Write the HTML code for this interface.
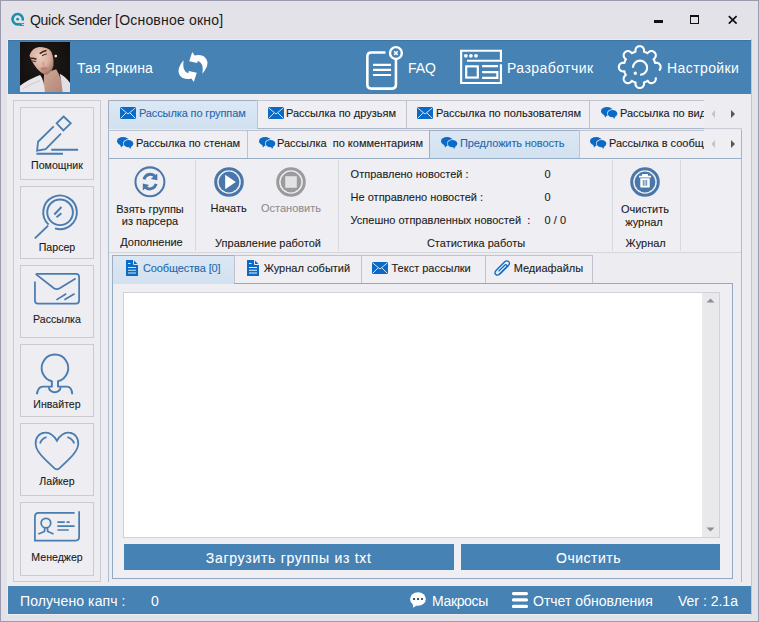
<!DOCTYPE html>
<html><head><meta charset="utf-8">
<style>
*{margin:0;padding:0;box-sizing:border-box}
html,body{width:759px;height:622px;overflow:hidden;background:#e3e2e8;font-family:"Liberation Sans",sans-serif;color:#1b1b1b}
.a{position:absolute}
.t{position:absolute;white-space:nowrap;line-height:1}
#win{position:absolute;left:0;top:0;width:759px;height:622px;border:1px solid #9d9bb0;background:#e3e2e8}
#hdr{position:absolute;left:8px;top:40px;width:743px;height:54px;background:#4682b4;border-top:1px solid #3f73a0}
.wt{color:#fff;font-size:14px}
.lbtn{position:absolute;left:20px;width:74px;height:73px;border:1px solid #c9cad3;background:#ededf2}
.lbtn svg{position:absolute;left:0;top:0}
.lbl{position:absolute;left:0;width:72px;text-align:center;font-size:10.6px;line-height:1;-webkit-text-stroke:0.1px currentColor}
.tab{position:absolute;height:29px;border:1px solid #bfc3ce;border-bottom:none;background:#eeeef3}
.tab.sel{background:linear-gradient(#dbe7f4,#d2e1f0);border-color:#a2aebf}
.tt{position:absolute;font-size:11px;line-height:1;white-space:nowrap;-webkit-text-stroke:0.1px currentColor}
.blue{color:#1f68ae;letter-spacing:-0.12px}
.ico{position:absolute}
</style></head><body>
<div id="win"></div>
<div class="a" style="left:7px;top:39px;width:745px;height:576px;background:#ececf1;border-right:1px solid #c3c5ce"></div>

<!-- title bar -->

<div class="t" style="left:30px;top:13px;font-size:14px;color:#1b1b1b"><span style="letter-spacing:-0.28px">Quick Sender </span><span style="letter-spacing:0.2px">[Основное окно]</span></div>
<div class="a" style="left:654px;top:20px;width:9px;height:3px;background:#111"></div>
<div class="a" style="left:690px;top:15px;width:9px;height:9px;border:1px solid #111;border-top-width:2px"></div>
<svg class="a" style="left:728px;top:15px" width="10" height="10" viewBox="0 0 10 10"><path d="M0.8 1.2L8.6 8.6M8.6 1.2L0.8 8.6" stroke="#111" stroke-width="1.7"/></svg>

<!-- header -->
<div id="hdr"></div>
<svg class="a" style="left:20px;top:42px" width="50" height="50" viewBox="0 0 622 622">
<defs>
<radialGradient id="sk" cx="0.45" cy="0.35" r="0.65"><stop offset="0" stop-color="#ecccbd"/><stop offset="0.6" stop-color="#d9b09f"/><stop offset="1" stop-color="#a57a69"/></radialGradient>
<linearGradient id="nk" x1="0" y1="0" x2="1" y2="1"><stop offset="0" stop-color="#d0a897"/><stop offset="1" stop-color="#b08675"/></linearGradient>
<radialGradient id="bg" cx="0.5" cy="0.4" r="0.7"><stop offset="0" stop-color="#221b17"/><stop offset="1" stop-color="#0f0d0d"/></radialGradient>
</defs>
<rect width="622" height="622" fill="url(#bg)"/>
<path d="M300 390 L450 340 Q520 450 550 622 L300 622 Q290 500 300 390Z" fill="url(#nk)"/>
<path d="M110 150 Q150 60 250 55 Q350 55 390 120 Q425 200 415 300 Q395 380 330 410 Q270 400 210 330 Q150 260 110 150Z" fill="url(#sk)"/>
<path d="M100 130 Q160 30 280 35 Q360 40 405 110 Q330 62 240 62 Q150 70 115 170Z" fill="#1a1210"/>
<path d="M115 205 Q160 195 205 215 M245 145 Q290 110 330 105" stroke="#3b2620" stroke-width="18" fill="none"/>
<path d="M140 240 Q170 232 200 245 M275 170 Q305 150 335 150" stroke="#4a3028" stroke-width="14" fill="none"/>
<path d="M255 325 Q300 300 350 325 Q320 365 270 350Z" fill="#c27c72"/>
<path d="M290 250 Q280 285 300 300" stroke="#b78b7a" stroke-width="12" fill="none"/>
<circle cx="445" cy="175" r="17" fill="#ece8e4"/>
<path d="M0 545 Q90 470 250 410 Q300 470 310 622 L0 622Z" fill="#e8e5ea"/>
<path d="M495 395 Q570 430 622 510 L622 622 L530 622 Q520 500 495 395Z" fill="#e2dfe4"/>
<path d="M40 580 Q150 510 250 480" stroke="#cdc8cf" stroke-width="12" fill="none"/>
</svg>
<div class="t wt" style="left:77px;top:61px;letter-spacing:0.15px">Тая Яркина</div>


<div class="t wt" style="left:408px;top:61px">FAQ</div>

<div class="t wt" style="left:507px;top:61px;letter-spacing:0.44px">Разработчик</div>

<div class="t wt" style="left:667px;top:61px;letter-spacing:0.41px">Настройки</div>

<!-- left panel -->
<div class="a" style="left:13px;top:100px;width:88px;height:482px;border:1px solid #c9cad3"></div>
<div class="lbtn" style="top:107px"><div class="lbl" style="top:52px">Помощник</div></div>
<div class="lbtn" style="top:186px"><div class="lbl" style="top:55px">Парсер</div></div>
<div class="lbtn" style="top:265px"><div class="lbl" style="top:48px">Рассылка</div></div>
<div class="lbtn" style="top:344px"><div class="lbl" style="top:54px">Инвайтер</div></div>
<div class="lbtn" style="top:423px"><div class="lbl" style="top:52px">Лайкер</div></div>
<div class="lbtn" style="top:502px;height:74px"><div class="lbl" style="top:49px">Менеджер</div></div>

<!-- main tab area -->
<div class="a" style="left:108px;top:100px;width:1px;height:482px;background:#a9bdd5"></div>
<div class="a" style="left:741px;top:129px;width:1px;height:453px;background:#a9bdd5"></div>



<!-- row 1 tabs -->
<div class="a" style="left:108px;top:128px;width:634px;height:1px;background:#c8cdd8"></div>
<div class="tab sel" style="left:108px;top:100px;width:150px;height:29px"></div>
<div class="tab" style="left:257px;top:100px;width:150px;height:29px;border-bottom:1px solid #a9b6c8"></div>
<div class="tab" style="left:406px;top:100px;width:184px;height:29px;border-bottom:1px solid #a9b6c8"></div>
<div class="tab" style="left:589px;top:100px;width:115px;height:29px;border-right:none;border-bottom:1px solid #a9b6c8;overflow:hidden"></div>
<svg class="ico" style="left:120px;top:107px" width="16" height="12" viewBox="0 0 16 12"><rect x="0" y="0" width="16" height="12" rx="1.5" fill="#0b6ac6"/><path d="M1 1.2 L8 7 L15 1.2 M1 11 L6 6 M15 11 L10 6" stroke="#cfe3f7" stroke-width="1" fill="none"/></svg><svg class="ico" style="left:268px;top:107px" width="16" height="12" viewBox="0 0 16 12"><rect x="0" y="0" width="16" height="12" rx="1.5" fill="#0b6ac6"/><path d="M1 1.2 L8 7 L15 1.2 M1 11 L6 6 M15 11 L10 6" stroke="#cfe3f7" stroke-width="1" fill="none"/></svg><svg class="ico" style="left:417px;top:107px" width="16" height="12" viewBox="0 0 16 12"><rect x="0" y="0" width="16" height="12" rx="1.5" fill="#0b6ac6"/><path d="M1 1.2 L8 7 L15 1.2 M1 11 L6 6 M15 11 L10 6" stroke="#cfe3f7" stroke-width="1" fill="none"/></svg><svg class="ico" style="left:601px;top:107px" width="17" height="12" viewBox="0 0 17 12"><ellipse cx="6" cy="4.3" rx="6" ry="4.2" fill="#0b6ac6"/><path d="M3 7 L4 10.5 L7 7.5Z" fill="#0b6ac6"/><ellipse cx="11.5" cy="6.5" rx="5.5" ry="4.2" fill="#eeeef3"/><ellipse cx="11.5" cy="6.6" rx="4.8" ry="3.7" fill="#0b6ac6"/><path d="M12 9.5 L13 12 L14.5 9.5Z" fill="#0b6ac6"/></svg>
<div class="tt blue" style="left:139px;top:108px">Рассылка по группам</div>
<div class="tt" style="left:286px;top:108px">Рассылка по друзьям</div>
<div class="tt" style="left:436px;top:108px">Рассылка по пользователям</div>
<div class="tt" style="left:620px;top:108px;width:84px;overflow:hidden">Рассылка по видео</div>
<svg class="a" style="left:709px;top:108px" width="30" height="12" viewBox="0 0 30 12"><path d="M6 2 L2.5 6 L6 10Z" fill="#c4c4c8"/><path d="M22 2 L26 6 L22 10Z" fill="#555"/></svg>

<!-- row 2 tabs -->
<div class="a" style="left:108px;top:129px;width:634px;height:30px;border:1px solid #a3b5cc;border-top:1px solid #e6ebf3;border-bottom:1px solid #9aaec6;background:#eeeef3"></div>
<div class="tab" style="left:109px;top:130px;width:139px;height:28px;border-left:none"></div>
<div class="tab" style="left:247px;top:130px;width:183px;height:28px"></div>
<div class="tab sel" style="left:429px;top:130px;width:151px;height:28px"></div>
<div class="tab" style="left:579px;top:130px;width:125px;height:28px;border-right:none"></div>
<svg class="ico" style="left:117px;top:137px" width="17" height="12" viewBox="0 0 17 12"><ellipse cx="6" cy="4.3" rx="6" ry="4.2" fill="#0b6ac6"/><path d="M3 7 L4 10.5 L7 7.5Z" fill="#0b6ac6"/><ellipse cx="11.5" cy="6.5" rx="5.5" ry="4.2" fill="#eeeef3"/><ellipse cx="11.5" cy="6.6" rx="4.8" ry="3.7" fill="#0b6ac6"/><path d="M12 9.5 L13 12 L14.5 9.5Z" fill="#0b6ac6"/></svg><svg class="ico" style="left:259px;top:137px" width="17" height="12" viewBox="0 0 17 12"><ellipse cx="6" cy="4.3" rx="6" ry="4.2" fill="#0b6ac6"/><path d="M3 7 L4 10.5 L7 7.5Z" fill="#0b6ac6"/><ellipse cx="11.5" cy="6.5" rx="5.5" ry="4.2" fill="#eeeef3"/><ellipse cx="11.5" cy="6.6" rx="4.8" ry="3.7" fill="#0b6ac6"/><path d="M12 9.5 L13 12 L14.5 9.5Z" fill="#0b6ac6"/></svg><svg class="ico" style="left:441px;top:137px" width="17" height="12" viewBox="0 0 17 12"><ellipse cx="6" cy="4.3" rx="6" ry="4.2" fill="#0b6ac6"/><path d="M3 7 L4 10.5 L7 7.5Z" fill="#0b6ac6"/><ellipse cx="11.5" cy="6.5" rx="5.5" ry="4.2" fill="#d6e3f1"/><ellipse cx="11.5" cy="6.6" rx="4.8" ry="3.7" fill="#0b6ac6"/><path d="M12 9.5 L13 12 L14.5 9.5Z" fill="#0b6ac6"/></svg><svg class="ico" style="left:590px;top:137px" width="17" height="12" viewBox="0 0 17 12"><ellipse cx="6" cy="4.3" rx="6" ry="4.2" fill="#0b6ac6"/><path d="M3 7 L4 10.5 L7 7.5Z" fill="#0b6ac6"/><ellipse cx="11.5" cy="6.5" rx="5.5" ry="4.2" fill="#eeeef3"/><ellipse cx="11.5" cy="6.6" rx="4.8" ry="3.7" fill="#0b6ac6"/><path d="M12 9.5 L13 12 L14.5 9.5Z" fill="#0b6ac6"/></svg>
<div class="tt" style="left:136px;top:138px">Рассылка по стенам</div>
<div class="tt" style="left:277px;top:138px">Рассылка&nbsp; по комментариям</div>
<div class="tt blue" style="left:460px;top:138px">Предложить новость</div>
<div class="tt" style="left:609px;top:138px;width:95px;overflow:hidden">Рассылка в сообществах</div>
<svg class="a" style="left:709px;top:138px" width="30" height="12" viewBox="0 0 30 12"><path d="M6 2 L2.5 6 L6 10Z" fill="#c4c4c8"/><path d="M22 2 L26 6 L22 10Z" fill="#555"/></svg>


<!-- ribbon -->
<div class="a" style="left:109px;top:159px;width:632px;height:94px;background:#efeff3;border-bottom:1px solid #d5d7de"></div>
<div class="a" style="left:195px;top:160px;width:1px;height:91px;background:#d8d9e0"></div>
<div class="a" style="left:338px;top:160px;width:1px;height:91px;background:#d8d9e0"></div>
<div class="a" style="left:612px;top:160px;width:1px;height:91px;background:#d8d9e0"></div>
<div class="a" style="left:680px;top:160px;width:1px;height:91px;background:#d8d9e0"></div>
<svg class="ico" style="left:128px;top:160px" width="45" height="45" viewBox="0 0 622 622">
  <circle cx="303" cy="302" r="200" fill="none" stroke="#4a77a9" stroke-width="28"/>
  <path d="M222 268 A90 90 0 0 1 375 225" fill="none" stroke="#4a77a9" stroke-width="40"/>
  <path d="M405 185 L405 280 L315 262Z" fill="#4a77a9"/>
  <path d="M388 330 A90 90 0 0 1 232 368" fill="none" stroke="#4a77a9" stroke-width="40"/>
  <path d="M205 420 L205 325 L292 345Z" fill="#4a77a9"/>
</svg>
<svg class="ico" style="left:212px;top:165px" width="34" height="34" viewBox="0 0 34 34">
  <circle cx="17" cy="17" r="13.3" fill="none" stroke="#4a77a9" stroke-width="3"/>
  <circle cx="17" cy="17" r="10.4" fill="#4a77a9"/>
  <path d="M13.2 9.8 L23.8 17 L13.2 24.2Z" fill="#fff"/>
</svg>
<svg class="ico" style="left:274px;top:165px" width="34" height="34" viewBox="0 0 34 34">
  <circle cx="17" cy="17" r="13.3" fill="none" stroke="#9b9b9d" stroke-width="3"/>
  <circle cx="17" cy="17" r="10.4" fill="#9b9b9d"/>
  <rect x="11.2" y="11.2" width="11.6" height="11.6" fill="#e2e2e4"/>
</svg>
<svg class="ico" style="left:628px;top:165px" width="34" height="34" viewBox="0 0 34 34">
  <circle cx="17" cy="17" r="13.3" fill="none" stroke="#4a77a9" stroke-width="3"/>
  <circle cx="17" cy="17" r="10.4" fill="#4a77a9"/>
  <path d="M11 11.6 H23 M15 11.6 V10 H19 V11.6" stroke="#fff" stroke-width="1.8" fill="none"/>
  <path d="M12.3 13.3 H21.7 V22 Q21.7 22.5 21 22.5 H13 Q12.3 22.5 12.3 22Z" fill="#fff"/>
  <path d="M15.3 15 V20.8 M17 15 V20.8 M18.7 15 V20.8" stroke="#4a77a9" stroke-width="0.9"/>
</svg>
<div class="tt" style="top:204.4px;font-size:11px;left:80.0px;width:140px;text-align:center;">Взять группы</div>
<div class="tt" style="top:216.0px;font-size:11px;left:80.0px;width:140px;text-align:center;">из парсера</div>
<div class="tt" style="top:237.2px;font-size:11px;left:81.5px;width:140px;text-align:center;">Дополнение</div>
<div class="tt" style="top:203.3px;font-size:11px;left:210.5px;">Начать</div>
<div class="tt" style="top:203.3px;font-size:11px;color:#8d8d90;left:261px;">Остановить</div>
<div class="tt" style="top:237.7px;font-size:11px;left:198.0px;width:140px;text-align:center;">Управление работой</div>
<div class="tt" style="top:168.5px;font-size:11px;left:350.6px;">Отправлено новостей :</div>
<div class="tt" style="top:191.6px;font-size:11px;left:350.6px;">Не отправлено новостей :</div>
<div class="tt" style="top:215.0px;font-size:11px;left:350.6px;">Успешно отправленных новостей &nbsp;:</div>
<div class="tt" style="top:168.5px;font-size:11px;left:544.6px;">0</div>
<div class="tt" style="top:191.6px;font-size:11px;left:544.6px;">0</div>
<div class="tt" style="top:215.0px;font-size:11px;left:544.6px;">0 / 0</div>
<div class="tt" style="top:238.2px;font-size:11px;left:406.0px;width:140px;text-align:center;">Статистика работы</div>
<div class="tt" style="top:203.7px;font-size:11px;left:615.0px;width:60px;text-align:center;">Очистить</div>
<div class="tt" style="top:217.1px;font-size:11px;left:614.0px;width:60px;text-align:center;">журнал</div>
<div class="tt" style="top:238.2px;font-size:11px;left:615.7px;width:60px;text-align:center;">Журнал</div>

<!-- tab control 3 -->
<div class="a" style="left:112px;top:283px;width:621px;height:296px;border:1px solid #94a8c1;background:#eeeef3"></div>
<div class="tab sel" style="left:112px;top:255px;width:123px;height:29px"></div>
<div class="tab" style="left:234px;top:255px;width:128px;height:28px"></div>
<div class="tab" style="left:361px;top:255px;width:125px;height:28px"></div>
<div class="tab" style="left:485px;top:255px;width:108px;height:28px"></div>
<svg class="ico" style="left:126px;top:260px" width="12" height="16" viewBox="0 0 12 16"><path d="M0 0 H7.5 L12 4.5 V16 H0Z" fill="#0b6ac6"/><path d="M7.5 0 V4.5 H12" fill="none" stroke="#d5e3f1" stroke-width="1"/><path d="M2 3.5 H4.5 M2 7.5 H10 M2 10.3 H10 M2 13 H10" stroke="#d5e3f1" stroke-width="1.1"/></svg><svg class="ico" style="left:247px;top:260px" width="12" height="16" viewBox="0 0 12 16"><path d="M0 0 H7.5 L12 4.5 V16 H0Z" fill="#0b6ac6"/><path d="M7.5 0 V4.5 H12" fill="none" stroke="#eeeef3" stroke-width="1"/><path d="M2 3.5 H4.5 M2 7.5 H10 M2 10.3 H10 M2 13 H10" stroke="#eeeef3" stroke-width="1.1"/></svg><svg class="ico" style="left:372px;top:262px" width="16" height="12" viewBox="0 0 16 12"><rect x="0" y="0" width="16" height="12" rx="1.5" fill="#0b6ac6"/><path d="M1 1.2 L8 7 L15 1.2 M1 11 L6 6 M15 11 L10 6" stroke="#cfe3f7" stroke-width="1" fill="none"/></svg><svg class="ico" style="left:494px;top:260px" width="18" height="16" viewBox="0 0 18 16"><path d="M5.5 14.5 L14.5 5.5 Q16.5 3 14.5 1.5 Q12.5 0 10.5 2 L2 10.5 Q0 13 1.8 14.5 Q3.5 16 5.5 14 L12.5 7 Q13.5 5.8 12.6 5 Q11.7 4.2 10.7 5.2 L4.5 11.4" fill="none" stroke="#0b6ac6" stroke-width="1.3"/></svg><div class="tt" style="top:262.7px;font-size:11px;color:#1f68ae;letter-spacing:-0.12px;left:143px;">Сообщества [0]</div>
<div class="tt" style="top:262.7px;font-size:11px;left:263.7px;">Журнал событий</div>
<div class="tt" style="top:262.7px;font-size:11px;left:391.5px;">Текст рассылки</div>
<div class="tt" style="top:262.7px;font-size:11px;left:513.7px;">Медиафайлы</div>

<div class="a" style="left:123px;top:292px;width:597px;height:246px;background:#fff;border:1px solid #d0d2d8"></div>
<div class="a" style="left:702px;top:293px;width:17px;height:244px;background:#e9e9eb"></div>
<svg class="a" style="left:702px;top:293px" width="17" height="244" viewBox="0 0 17 244"><path d="M4.5 9.5 L8.5 5.5 L12.5 9.5Z" fill="#8f8f93"/><path d="M4.5 234.5 L8.5 238.5 L12.5 234.5Z" fill="#8f8f93"/></svg>
<div class="a" style="left:124px;top:544px;width:330px;height:26px;background:#4682b4"></div>
<div class="a" style="left:461px;top:544px;width:259px;height:26px;background:#4682b4"></div>
<div class="tt" style="top:550.9px;font-size:14px;color:#fff;left:138.7px;width:300px;text-align:center;letter-spacing:0.7px;">Загрузить группы из txt</div>
<div class="tt" style="top:550.9px;font-size:14px;color:#fff;left:488.5px;width:200px;text-align:center;letter-spacing:0.5px;">Очистить</div>

<!-- status bar -->
<div class="a" style="left:8px;top:586px;width:743px;height:28px;background:#4682b4"></div>
<div class="t wt" style="left:20px;top:594px;letter-spacing:0.1px">Получено капч :</div>
<div class="t wt" style="left:151px;top:594px">0</div>
<div class="t wt" style="left:432px;top:594px;letter-spacing:-0.35px">Макросы</div>
<div class="t wt" style="left:533px;top:594px">Отчет обновления</div>
<div class="t wt" style="left:678px;top:594px">Ver : 2.1a</div>
<!-- icons -->
<svg class="a" style="left:30px;top:110px" width="55" height="50" viewBox="0 0 684 622" fill="none" stroke-linecap="butt"><g stroke="#4a7cb0" stroke-width="22"><path d="M418 81 L507 165 L415 254 L331 165Z"/><path d="M295 205 L100 395 L88 505 L195 488 L385 295"/><path d="M265 495 H598 M80 545 H410" stroke-width="24"/></g></svg>
<svg class="a" style="left:30px;top:188px" width="55" height="55" viewBox="0 0 622 622" fill="none" stroke-linecap="butt"><g stroke="#4a7cb0" stroke-width="22"><path d="M210.4 414 A190 190 0 1 1 282.9 456.2"/><circle cx="340" cy="275" r="145"/><path d="M205 425 L55 570"/><path d="M275 300 L355 215 M300 330 L355 285"/></g></svg>
<svg class="a" style="left:30px;top:268px" width="55" height="42" viewBox="0 0 759 580" fill="none" stroke-linecap="butt"><g stroke="#4a7cb0" stroke-width="24"><path d="M80 80 H635 Q678 80 678 123 V450 Q678 492 635 492 H110 Q68 492 68 450 V185"/><path d="M80 85 L330 280 Q370 305 410 280 L630 145"/><path d="M365 440 L500 355 M475 440 L615 355"/></g></svg>
<svg class="a" style="left:30px;top:346px" width="55" height="50" viewBox="0 0 684 622" fill="none" stroke-linecap="butt"><g stroke="#4a7cb0" stroke-width="24"><path d="M272 438 A165 168 0 1 1 348 438"/><path d="M272 430 V512 M348 430 V512"/><path d="M235 512 A72 62 0 0 0 380 512"/><path d="M85 600 Q100 505 160 505 H272 M348 505 H460 Q520 505 525 600"/></g></svg>
<svg class="a" style="left:30px;top:425px" width="55" height="50" viewBox="0 0 684 622" fill="none" stroke-linecap="butt"><g stroke="#4a7cb0" stroke-width="22"><path d="M335 195 C290 120 230 90 185 95 C110 100 65 160 70 240 C75 320 140 385 200 440 L305 540 Q335 565 365 540 L470 440 C530 385 595 320 600 240 C605 160 560 100 485 95 C440 90 380 120 335 195 Z"/><path d="M125 230 Q145 165 205 150 M465 150 Q525 165 550 230"/></g></svg>
<svg class="a" style="left:30px;top:505px" width="55" height="40" viewBox="0 0 759 552" fill="none" stroke-linecap="butt"><g stroke="#4a7cb0" stroke-width="24"><path d="M615 108 H120 Q68 108 68 160 V490 H630 Q678 490 678 442 V85"/><circle cx="220" cy="250" r="66"/><path d="M203 318 L200 365 L115 400 M240 318 L245 365 L325 400"/><path d="M378 235 H480 M505 235 H548 M378 290 H615 M378 345 H535"/></g></svg>
<svg class="a" style="left:614px;top:42px" width="52" height="50" viewBox="0 0 647 622" fill="none" stroke-linecap="butt"><g stroke="#fff" stroke-width="26"><path d="M516.9 439.8 L519.0 446.8 L520.0 453.3 L520.1 459.4 L519.6 465.1 L518.5 470.5 L516.9 475.7 L514.8 480.5 L512.3 485.1 L509.4 489.3 L506.2 493.3 L502.7 497.0 L498.8 500.3 L494.7 503.3 L490.2 505.9 L485.5 508.2 L480.4 509.9 L475.1 511.2 L469.5 512.0 L463.6 512.1 L457.3 511.5 L450.5 509.8 L443.0 506.7 L434.3 501.1 L419.1 483.4 L415.7 485.3 L412.3 487.2 L408.9 488.9 L405.4 490.6 L401.9 492.3 L398.3 493.9 L394.7 495.4 L391.1 496.8 L387.5 498.1 L383.8 499.4 L380.1 500.6 L376.4 501.8 L372.7 502.9 L373.2 520.5 L371.8 532.8 L369.0 541.2 L365.6 547.7 L361.7 553.0 L357.5 557.5 L353.1 561.2 L348.5 564.3 L343.8 566.8 L338.9 568.8 L333.9 570.3 L328.9 571.3 L323.8 571.9 L318.7 572.0 L313.6 571.6 L308.5 570.8 L303.5 569.6 L298.6 567.8 L293.8 565.6 L289.1 562.8 L284.6 559.4 L280.3 555.3 L276.2 550.4 L272.6 544.5 L269.5 537.2 L267.2 527.3 L268.8 504.7 L265.4 502.3 L261.6 501.2 L257.9 500.0 L254.3 498.8 L250.6 497.4 L247.0 496.1 L243.4 494.6 L239.8 493.1 L236.3 491.4 L232.8 489.8 L229.3 488.0 L225.9 486.2 L222.5 484.3 L210.9 496.3 L200.9 504.4 L193.0 508.5 L186.0 510.8 L179.4 511.9 L173.3 512.1 L167.6 511.7 L162.1 510.6 L156.9 509.1 L152.0 507.1 L147.5 504.6 L143.1 501.8 L139.1 498.6 L135.4 495.1 L132.1 491.3 L129.0 487.2 L126.4 482.8 L124.1 478.0 L122.2 473.1 L120.9 467.8 L120.1 462.2 L119.9 456.3 L120.4 450.0 L121.9 443.3 L124.8 436.0 L130.0 427.5 L143.6 414.5 L146.9 408.1 L145.1 404.7 L143.3 401.3 L141.6 397.8 L139.9 394.3 L138.3 390.7 L136.8 387.2 L135.4 383.6 L134.0 379.9 L132.7 376.3 L131.5 372.6 L130.3 368.9 L129.3 365.1 L113.6 365.2 L100.3 364.0 L91.7 361.4 L85.0 358.0 L79.5 354.2 L75.0 350.1 L71.2 345.7 L68.1 341.1 L65.5 336.3 L63.4 331.5 L61.9 326.5 L60.8 321.5 L60.2 316.4 L60.0 311.3 L60.3 306.2 L61.0 301.1 L62.3 296.1 L63.9 291.2 L66.1 286.3 L68.9 281.6 L72.2 277.1 L76.2 272.8 L81.0 268.7 L86.7 265.0 L93.9 261.8 L103.3 259.4 L120.4 259.4 L129.6 257.8 L130.7 254.1 L131.8 250.4 L133.1 246.7 L134.4 243.1 L135.8 239.4 L137.2 235.8 L138.8 232.3 L140.4 228.7 L142.0 225.2 L143.8 221.8 L145.6 218.3 L147.4 214.9 L137.3 204.5 L128.2 194.0 L123.9 185.9 L121.4 178.8 L120.2 172.2 L119.8 166.0 L120.2 160.2 L121.2 154.7 L122.7 149.5 L124.7 144.6 L127.1 140.0 L129.8 135.6 L133.0 131.6 L136.4 127.9 L140.2 124.4 L144.3 121.4 L148.7 118.7 L153.4 116.3 L158.3 114.4 L163.6 113.0 L169.1 112.1 L175.0 111.8 L181.2 112.3 L187.9 113.7 L195.1 116.4 L203.4 121.2 L214.9 132.2 L223.5 139.1 L226.9 137.3 L230.3 135.5 L233.8 133.8 L237.3 132.1 L240.8 130.5 L244.4 129.0 L248.0 127.6 L251.6 126.2 L255.3 124.9 L259.0 123.6 L262.7 122.5 L266.4 121.4 L267.0 108.1 L267.7 93.6 L270.3 84.6 L273.6 77.7 L277.3 72.1 L281.4 67.5 L285.8 63.6 L290.4 60.4 L295.1 57.8 L300.0 55.6 L304.9 54.0 L309.9 52.9 L315.0 52.2 L320.1 52.0 L325.2 52.2 L330.3 52.9 L335.3 54.1 L340.2 55.7 L345.1 57.9 L349.8 60.5 L354.4 63.8 L358.7 67.7 L362.8 72.4 L366.6 78.0 L369.8 84.9 L372.3 94.0 L373.0 109.0 L373.7 121.4 L377.5 122.5 L381.2 123.7 L384.9 124.9 L388.5 126.2 L392.1 127.6 L395.7 129.1 L399.3 130.6 L402.9 132.2 L406.4 133.8 L409.8 135.6 L413.3 137.3 L416.7 139.2 L425.8 131.4 L437.0 121.0 L445.2 116.2 L452.4 113.6 L459.1 112.3 L465.3 111.8 L471.1 112.2 L476.6 113.1 L481.9 114.5 L486.8 116.4 L491.5 118.8 L495.9 121.5 L499.9 124.6 L503.7 128.0 L507.2 131.8 L510.3 135.8 L513.0 140.2 L515.4 144.8 L517.4 149.7 L518.8 154.9 L519.8 160.5 L520.2 166.3 L519.8 172.5 L518.5 179.1 L516.0 186.2 L511.5 194.3 L502.0 205.0 L492.6 215.1 L494.5 218.5 L496.3 221.9 L498.0 225.4 L499.7 228.9 L501.3 232.4 L502.8 236.0 L504.3 239.6 L505.7 243.2 L507.0 246.9 L508.2 250.5 L509.4 254.2 L510.5 258.0 L520.9 259.2 L537.1 259.5 L546.5 261.9 L553.5 265.2 L559.3 268.9 L564.0 272.9 L568.0 277.3 L571.3 281.8 L574.0 286.5 L576.1 291.4 L577.8 296.3 L579.0 301.3 L579.7 306.4 L580.0 311.5 L579.8 316.6 L579.2 321.7 L578.1 326.7 L576.5 331.7 L574.4 336.5 L571.8 341.3 L568.6 345.9 L564.8 350.2 L560.2 354.4"/><path d="M236 320 A88 88 0 1 1 325 408"/><circle cx="265" cy="388" r="8" fill="#fff"/></g></svg>
<svg class="a" style="left:360px;top:40px" width="90" height="54" viewBox="0 0 759 455" fill="none" stroke-linecap="butt"><g stroke="#fff" stroke-width="22"><path d="M215 105 H95 Q62 105 62 140 V378 Q62 410 95 410 H272 Q303 410 303 378 V165"/><circle cx="303" cy="110" r="50" stroke-width="20"/><path d="M288 95 L318 125 M318 95 L288 125" stroke-width="13"/><path d="M110 210 H262 M110 252 H262 M110 295 H262" stroke-width="18"/></g></svg>
<svg class="a" style="left:455px;top:45px" width="50" height="45" viewBox="0 0 691 622" fill="none" stroke-linecap="butt"><g stroke="#fff" stroke-width="30"><path d="M635 235 V80 H85 V525 H635 V265"/><path d="M165 218 H650"/><rect x="155" y="295" width="160" height="155"/><path d="M375 292 H595 M375 375 H585 V455 H375"/></g><g fill="#fff"><circle cx="150" cy="150" r="26"/><circle cx="220" cy="150" r="26"/><circle cx="290" cy="150" r="26"/></g></svg>
<svg class="a" style="left:172px;top:46px" width="42" height="42" viewBox="0 0 622 622" fill="none" stroke-linecap="butt"><g fill="#fff" stroke="none"><path d="M300 90 L335 140 Q400 120 470 150 Q530 200 525 260 Q520 330 450 410 Q462 330 448 285 Q430 235 380 218 L375 250 L255 225 Z"/><path d="M300 90 L335 140 Q400 120 470 150 Q530 200 525 260 Q520 330 450 410 Q462 330 448 285 Q430 235 380 218 L375 250 L255 225 Z" transform="rotate(180 311 311)"/></g></svg>
<svg class="a" style="left:8px;top:10px" width="20" height="20" viewBox="0 0 622 622" fill="none" stroke-linecap="butt"><g stroke="#1a8fae"><path d="M455 330 A160 160 0 1 0 370 430" stroke-width="80"/><circle cx="300" cy="285" r="45" fill="#1a8fae" stroke="none"/><path d="M330 430 L420 400 L440 500 L370 500Z" fill="#1a8fae" stroke="none"/><path d="M440 420 H500 M440 480 H500" stroke-width="30"/></g></svg>
<svg class="a" style="left:406px;top:588px" width="26" height="24" viewBox="0 0 674 622" fill="none" stroke-linecap="butt"><g fill="#fff"><ellipse cx="310" cy="285" rx="205" ry="175"/><path d="M170 400 L190 515 L290 440Z"/></g><g fill="#3d4c5e"><rect x="180" y="260" width="55" height="50"/><rect x="285" y="260" width="55" height="50"/><rect x="390" y="260" width="50" height="50"/></g></svg>
<svg class="a" style="left:508px;top:588px" width="26" height="24" viewBox="0 0 674 622" fill="none" stroke-linecap="butt"><g stroke="#fff" stroke-width="82" stroke-linecap="round"><path d="M141 145 H479 M141 308 H479 M141 478 H479"/></g></svg>
</body></html>
